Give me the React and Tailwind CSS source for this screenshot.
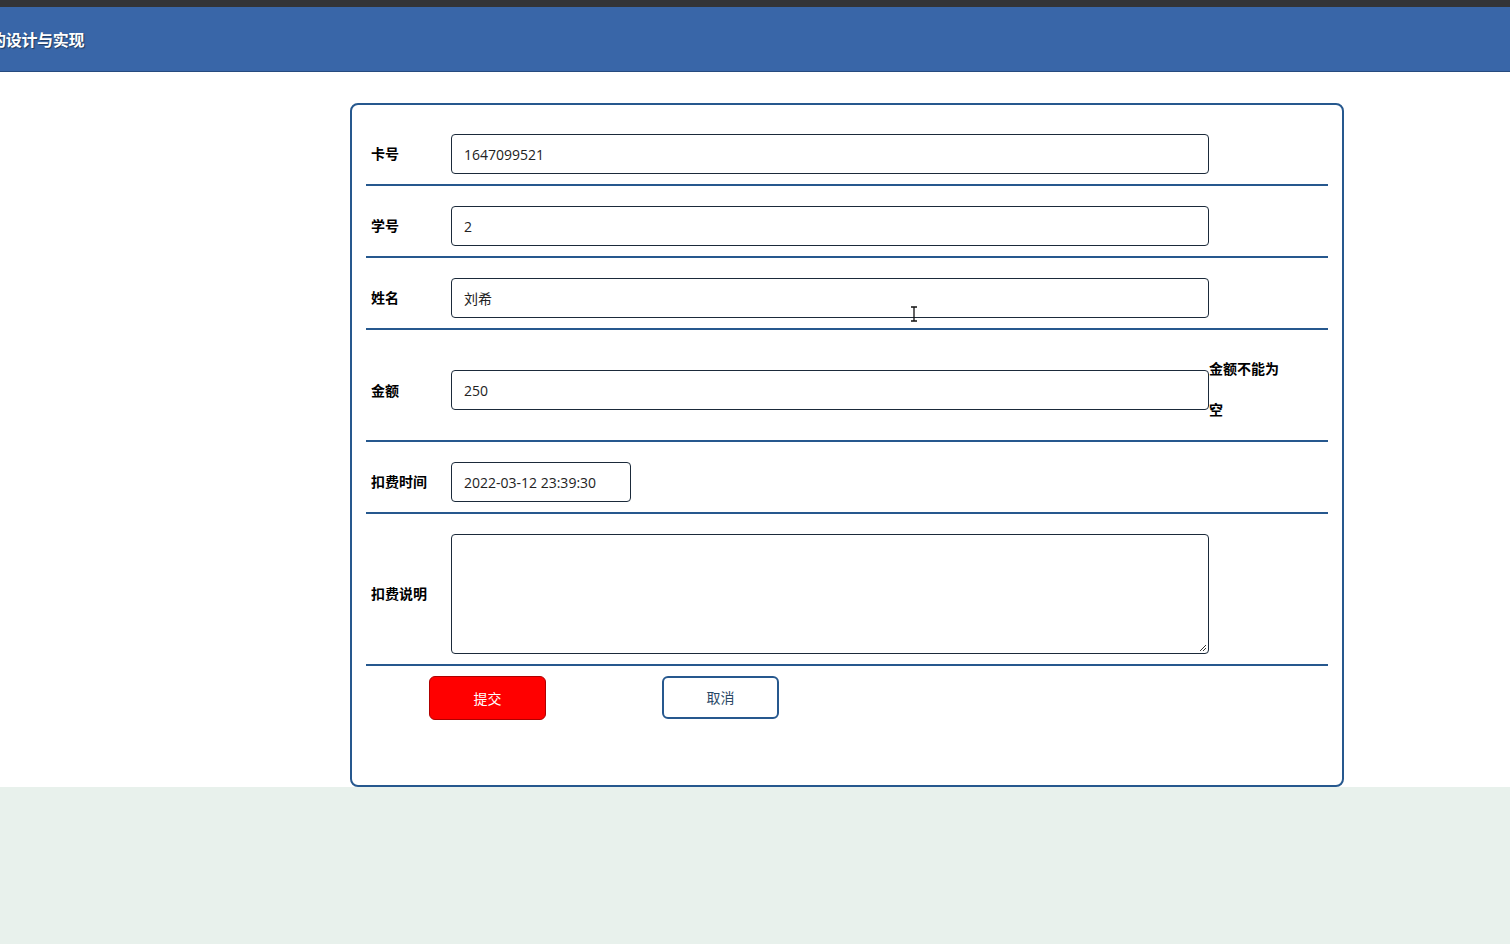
import React from "react";

const font = { fontFamily: '"Noto Sans CJK SC", "Noto Sans", sans-serif' };
const numFont = { fontFamily: '"Open Sans", "Noto Sans CJK SC", sans-serif' };

function Row({ label, children }) {
  return (
    <div className="flex border-b-2 border-[#26588e] h-[72px]">
      <div className="w-[85px] flex items-center pl-[5px] pt-[9px] text-[14px] font-bold text-black">
        {label}
      </div>
      <div className="flex items-start pt-[20px] pb-[10px]">{children}</div>
    </div>
  );
}

const inputCls =
  "h-[40px] border border-[#1b2a3a] rounded-[4px] bg-white pl-[12px] flex items-center text-[14px] text-[#222]";

export default function App() {
  return (
    <div className="min-h-[944px] bg-[#e8f1ec]" style={font}>
      <div className="h-[7px] bg-[#333437]" />
      <div className="h-[65px] bg-[#3966a8] border-b border-[#264a7e] flex items-center overflow-hidden">
        <span
          className="ml-[-10px] text-white text-[16px] font-bold tracking-[-0.3px]"
          style={{ textShadow: "1px 1px 1px rgba(0,0,0,0.45)" }}
        >
          的设计与实现
        </span>
      </div>
      <div className="bg-white h-[715px] pt-[31px] relative">
        <div className="ml-[350px] w-[994px] h-[684px] border-2 border-[#26588e] rounded-[8px] pt-[9px] px-[14px]">
          <Row label="卡号">
            <div className={`${inputCls} w-[758px]`} style={numFont}>1647099521</div>
          </Row>
          <Row label="学号">
            <div className={`${inputCls} w-[758px]`} style={numFont}>2</div>
          </Row>
          <Row label="姓名">
            <div className={`${inputCls} w-[758px]`}>刘希</div>
          </Row>
          <div className="flex border-b-2 border-[#26588e] h-[112px] pt-[10px] items-center">
            <div className="w-[85px] pl-[5px] text-[14px] font-bold text-black">金额</div>
            <div className={`${inputCls} w-[758px]`} style={numFont}>250</div>
            <div className="w-[72px] text-[14px] font-bold text-black leading-[41px] mt-[-2px]">金额不能为空</div>
          </div>
          <Row label="扣费时间">
            <div className={`${inputCls} w-[180px]`} style={numFont}>2022-03-12 23:39:30</div>
          </Row>
          <div className="flex border-b-2 border-[#26588e] h-[152px] items-start">
            <div className="w-[85px] pl-[5px] text-[14px] font-bold text-black h-full flex items-center pt-[9px]">扣费说明</div>
            <div className="pt-[20px] relative">
              <div className="w-[758px] h-[120px] border border-[#1b2a3a] rounded-[4px] bg-white relative">
                <svg className="absolute right-[1px] bottom-[1px]" width="9" height="9" viewBox="0 0 9 9">
                  <path d="M8 2 L2 8 M8 5 L5 8" stroke="#333" strokeWidth="1" />
                </svg>
              </div>
            </div>
          </div>
          <div className="flex pt-[10px]">
            <button className="ml-[63px] w-[117px] h-[44px] bg-[#ff0000] border border-[#b00000] rounded-[6px] text-white text-[14px]">
              提交
            </button>
            <button className="ml-[116px] w-[117px] h-[43px] bg-white border-2 border-[#26588e] rounded-[6px] text-[#2a4866] text-[14px]">
              取消
            </button>
          </div>
        </div>
        <svg className="absolute left-[909px] top-[234px]" width="10" height="16" viewBox="0 0 10 16">
          <path d="M2 1 H8 M5 1 V15 M2 15 H8" stroke="#111" strokeWidth="1.3" fill="none" />
        </svg>
      </div>
    </div>
  );
}
